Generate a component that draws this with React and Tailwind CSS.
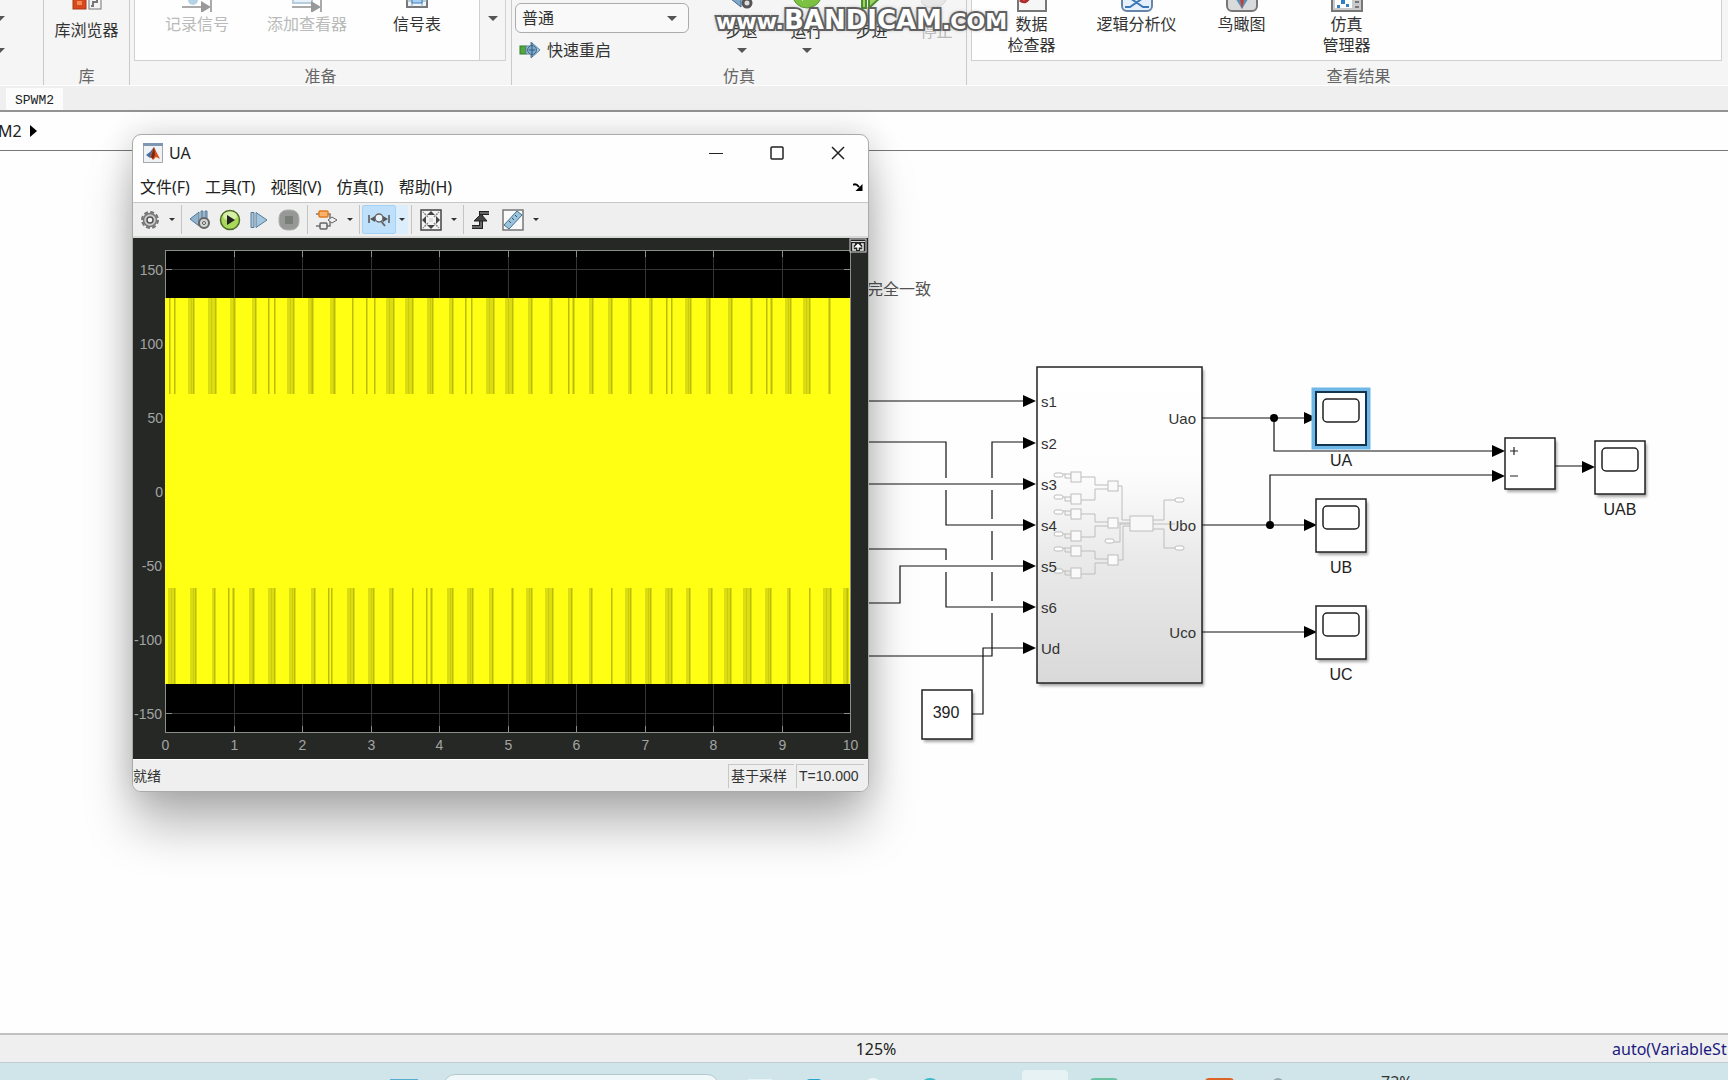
import React from 'react';

const UPPER_BANDS = [
    [4, 6], [9, 11], [23, 30], [43, 52], [65, 71], [87, 92], [104, 105], [109, 111], [122, 130], [143, 149],
    [165, 171], [187, 189], [201, 203], [209, 211], [221, 230], [240, 249], [262, 269], [284, 289], [301, 302],
    [306, 308], [321, 330], [340, 349], [363, 368], [384, 388], [403, 405], [407, 410], [424, 429], [443, 448],
    [463, 467], [484, 488], [502, 503], [506, 508], [520, 527], [541, 546], [563, 568], [585, 588], [602, 603],
    [605, 608], [620, 627], [638, 646], [663, 666],
];

const LOWER_BANDS = [
    [3, 11], [25, 32], [47, 51], [63, 65], [67, 70], [84, 90], [103, 111], [124, 131], [146, 151], [163, 165],
    [166, 168], [182, 190], [203, 210], [224, 229], [247, 249], [261, 263], [265, 268], [282, 289], [302, 309],
    [324, 329], [346, 349], [361, 368], [380, 389], [403, 408], [424, 428], [446, 448], [460, 467], [480, 487],
    [500, 508], [521, 526], [543, 548], [559, 567], [578, 587], [600, 607], [622, 626], [644, 646], [658, 667],
    [678, 684],
];

const Caret = ({ className = 'w-2.5 h-[5px] text-[#555]' }) => (
    <svg viewBox="0 0 10 5" className={className} fill="currentColor">
        <path d="M0 0h10L5 5z" />
    </svg>
);

/* ---------- ribbon ---------- */

const Section = ({ label, className = '', labelClass = '', children }) => (
    <section className={`flex flex-col h-[85px] border-r border-[#c9cac9] ${className}`}>
        <div className="flex-1 flex min-h-0">{children}</div>
        <div className={`h-[18px] leading-[18px] text-center text-base text-[#666] ${labelClass}`}>{label}</div>
    </section>
);

const RibbonItem = ({ icon, lines, disabled, className = '' }) => (
    <button disabled={disabled} className={`flex flex-col items-center shrink-0 ${disabled ? 'text-[#b9bab9]' : 'text-[#333]'} ${className}`}>
        <span className="-mt-3 h-6 mb-[2px]">{icon}</span>
        {lines.map((line) => (
            <span key={line} className="block text-base leading-[21px] whitespace-nowrap">{line}</span>
        ))}
    </button>
);

const LibraryIcon = () => (
    <svg width="32" height="24" viewBox="0 0 32 24">
        <rect x="2" y="0" width="12" height="10" fill="#4a86c5" />
        <rect x="2" y="11" width="13" height="12" fill="#d9481c" stroke="#a83814" />
        <rect x="6" y="15" width="5" height="4" fill="#f08b58" />
        <rect x="18" y="11" width="12" height="12" fill="#f2f4f5" stroke="#777" />
        <path d="M22 20v-4h4v-3M20 20h3" stroke="#777" strokeWidth="2" fill="none" />
    </svg>
);

const LogSignalIcon = () => (
    <svg width="34" height="24" viewBox="0 0 34 24">
        <circle cx="13" cy="12" r="5" fill="#b4d4e6" />
        <path d="M2 19h22M31 8v16" stroke="#aaa" strokeWidth="2" />
        <path d="M21 13l10 6-10 6z" fill="#999" />
    </svg>
);

const AddViewerIcon = () => (
    <svg width="34" height="24" viewBox="0 0 34 24">
        <rect x="3" y="2" width="19" height="13" fill="#e8f1f8" stroke="#b7cddd" strokeWidth="2" />
        <path d="M2 19h22M31 8v16" stroke="#aaa" strokeWidth="2" />
        <path d="M21 13l10 6-10 6z" fill="#999" />
    </svg>
);

const SignalTableIcon = () => (
    <svg width="24" height="24" viewBox="0 0 24 24">
        <rect x="2" y="0" width="20" height="19" fill="#eef4fb" stroke="#777" strokeWidth="2" />
        <path d="M2 7h20M2 13h20M7 1v18M17 1v18" stroke="#8aa" />
        <rect x="7" y="7" width="10" height="8" fill="#a8cff2" stroke="#3f7fc0" />
    </svg>
);

const DataInspectorIcon = () => (
    <svg width="32" height="24" viewBox="0 0 32 24">
        <rect x="2" y="0" width="28" height="23" fill="#f6f6f6" stroke="#777" strokeWidth="2" />
        <path d="M4 12q6 5 10-4" stroke="#b02a2a" strokeWidth="3" fill="none" />
    </svg>
);

const LogicIcon = () => (
    <svg width="32" height="24" viewBox="0 0 32 24">
        <rect x="1" y="-8" width="30" height="31" rx="5" fill="#e6f0fa" stroke="#6685a8" strokeWidth="2" />
        <path d="M4 10h5l13 9h6M4 19h5l13-9h6" stroke="#3a78b8" strokeWidth="2" fill="none" />
    </svg>
);

const BirdIcon = () => (
    <svg width="32" height="24" viewBox="0 0 32 24">
        <rect x="1" y="-8" width="30" height="31" rx="5" fill="#d8dadb" stroke="#777" strokeWidth="2" />
        <path d="M8 8l8 13 8-13z" fill="#5b8fb5" />
        <path d="M13 6h6l-3 15z" fill="#cc3a30" />
    </svg>
);

const SimManagerIcon = () => (
    <svg width="32" height="24" viewBox="0 0 32 24">
        <rect x="1" y="-2" width="30" height="25" fill="#c8cacb" stroke="#777" strokeWidth="2" />
        <rect x="4" y="1" width="17" height="19" fill="#fff" />
        <path d="M10 12h4v4h-4zM6 17h3v3H6zM15 16h3v3h-3z" fill="#2f7fc4" />
        <path d="M24 14h4M24 19h4" stroke="#777" strokeWidth="2" />
    </svg>
);

const FastRestartIcon = () => (
    <svg width="22" height="18" viewBox="0 0 22 18">
        <rect x="1" y="5" width="6" height="8" fill="#53a83d" stroke="#2f7d24" />
        <path d="M7 5h5V1l9 8-9 8v-4H7z" fill="#a9c6de" stroke="#5b82a6" />
        <circle cx="13" cy="9" r="4.500" fill="#7fa9cb" stroke="#44698c" />
        <path d="M13 2v14M10 9h6" stroke="#2f5a80" />
    </svg>
);

const SimButton = ({ icon, label, disabled, menu }) => (
    <button disabled={disabled} className={`w-[65px] flex flex-col items-center ${disabled ? 'text-[#b9bab9]' : 'text-[#333]'}`}>
        <span className="-mt-[15px] h-6 mb-3">{icon}</span>
        <span className="text-base leading-[20px]">{label}</span>
        {menu && <Caret className="w-2.5 h-[5px] mt-[7px] text-[#555]" />}
    </button>
);

const Ribbon = () => (
    <header className="relative flex bg-[#f4f5f4] overflow-hidden shrink-0 border-b border-white">
        <Section className="w-11 shrink-0">
            <div className="flex flex-col -ml-[5px] pt-4 gap-[27px]">
                <Caret />
                <Caret />
            </div>
        </Section>
        <Section label="库" className="w-[86px] shrink-0">
            <button className="w-full flex flex-col items-center text-[#333]">
                <span className="-mt-[14px] h-6 mb-[10px]"><LibraryIcon /></span>
                <span className="text-base leading-[20px]">库浏览器</span>
            </button>
        </Section>
        <Section label="准备" className="w-[382px] shrink-0">
            <div className="flex-1 flex bg-[#fdfefd] border border-t-0 border-[#cfd0cf] ml-1 mr-[5px] mb-[6px] pl-[7px]">
                <RibbonItem className="w-[110px]" icon={<LogSignalIcon />} lines={['记录信号']} disabled />
                <RibbonItem className="w-[110px]" icon={<AddViewerIcon />} lines={['添加查看器']} disabled />
                <RibbonItem className="w-[110px]" icon={<SignalTableIcon />} lines={['信号表']} />
                <button aria-label="更多" className="ml-auto w-[26px] flex justify-center pt-4 border-l border-[#cfd0cf] bg-[#f4f5f4]"><Caret /></button>
            </div>
        </Section>
        <Section label="仿真" className="w-[455px] shrink-0">
            <div className="flex flex-col pl-[3px] pt-[3px]">
                <div className="relative">
                    <select aria-label="仿真模式" className="appearance-none w-[174px] h-[30px] pl-[6px] text-base leading-[28px] text-[#333] bg-[#f8f9f8] border border-[#aaabaa] rounded-md">
                        <option>普通</option>
                    </select>
                    <Caret className="absolute right-3 top-[13px] w-2.5 h-[5px] text-[#555] pointer-events-none" />
                </div>
                <button className="flex items-center gap-[6px] h-6 mt-[5px] pl-[4px] text-base text-[#333]">
                    <FastRestartIcon />
                    快速重启
                </button>
            </div>
            <div className="flex items-start pl-5">
                <SimButton label="步退" menu icon={
                    <svg width="30" height="24" viewBox="0 0 30 24">
                        <path d="M4 14l10-8v16z" fill="#7fa9cb" stroke="#44698c" />
                        <circle cx="20" cy="18" r="4" fill="#ddd" stroke="#555" strokeWidth="3" />
                    </svg>
                } />
                <SimButton label="运行" menu icon={
                    <svg width="32" height="24" viewBox="0 0 32 24">
                        <circle cx="16" cy="8" r="15" fill="#7cc142" stroke="#55972c" />
                        <path d="M11 0l12 8-12 8z" fill="#fff" />
                    </svg>
                } />
                <SimButton label="步进" icon={
                    <svg width="28" height="24" viewBox="0 0 28 24">
                        <path d="M4 0h4v23H4zM11 0l14 10-14 13z" fill="#9fd067" stroke="#4a8f2c" strokeWidth="2" />
                    </svg>
                } />
                <SimButton label="停止" disabled icon={
                    <svg width="32" height="24" viewBox="0 0 32 24">
                        <circle cx="12" cy="8" r="15" fill="#e6e7e6" stroke="#d4d5d4" />
                    </svg>
                } />
            </div>
        </Section>
        <Section label="查看结果" className="flex-1 border-r-0" labelClass="pl-[22px]">
            <div className="flex-1 flex bg-[#fdfefd] border border-t-0 border-[#cfd0cf] ml-1 mr-[6px] mb-[6px] pl-[7px]">
                <RibbonItem className="w-[105px]" icon={<DataInspectorIcon />} lines={['数据', '检查器']} />
                <RibbonItem className="w-[105px]" icon={<LogicIcon />} lines={['逻辑分析仪']} />
                <RibbonItem className="w-[105px]" icon={<BirdIcon />} lines={['鸟瞰图']} />
                <RibbonItem className="w-[105px]" icon={<SimManagerIcon />} lines={['仿真', '管理器']} />
            </div>
        </Section>
    </header>
);

const Watermark = () => (
    <div className="absolute left-[716px] top-[5px] z-20 flex items-baseline whitespace-nowrap text-white font-bold font-['DejaVu_Sans',sans-serif] leading-[30px] [paint-order:stroke] [-webkit-text-stroke:4px_#666] [text-shadow:0_0_4px_#555]">
        <span className="text-[22px]">www.</span>
        <span className="text-[26px]">BANDICAM</span>
        <span className="text-[22px]">.COM</span>
    </div>
);

/* ---------- block diagram ---------- */

const Arrow = ({ x, y }) => <path d={`M${x - 13} ${y - 6}L${x} ${y}L${x - 13} ${y + 6}z`} fill="#000" />;

const Box = ({ x, y, w, h, fill = '#fefffe' }) => (
    <g>
        <rect x={x + 2} y={y + 3} width={w} height={h} fill="#000" opacity="0.35" filter="url(#soft)" />
        <rect x={x} y={y} width={w} height={h} fill={fill} stroke="#222" strokeWidth="1.5" />
    </g>
);

const ScopeBlock = ({ x, y, name, selected }) => (
    <g>
        {selected && <rect x={x - 2} y={y - 2} width="54" height="57" fill="none" stroke="#6fb7e6" strokeWidth="5" />}
        {selected
            ? <rect x={x} y={y} width="50" height="53" fill="#fefffe" stroke="#12354f" strokeWidth="2" />
            : <Box x={x} y={y} w={50} h={53} />}
        <rect x={x + 7} y={y + 7} width="36" height="23" rx="4" fill="none" stroke="#222" strokeWidth="1.5" />
        <text x={x + 25} y={y + 74} textAnchor="middle" fontSize="16" fill="#222">{name}</text>
    </g>
);

const INPUTS = [['s1', 401], ['s2', 443], ['s3', 484], ['s4', 525], ['s5', 566], ['s6', 607], ['Ud', 648]];
const OUTPUTS = [['Uao', 418], ['Ubo', 525], ['Uco', 632]];

// preview of the subsystem contents, shown faded inside the block
const Preview = () => (
    <g stroke="#bcbdbc" fill="none">
        {[474, 511, 548].map((y) => (
            <g key={y}>
                <path d={`M1063 ${y}h8v3M1063 ${y + 23}h8v3M1065 ${y}v4h6M1065 ${y + 23}v4h6M1081 ${y + 3}h14v8h13M1081 ${y + 26}h14v-11h13`} />
                <rect x="1054" y={y - 1} width="9" height="4" rx="2" fill="#fff" />
                <rect x="1054" y={y + 21} width="9" height="4" rx="2" fill="#fff" />
                <rect x="1071" y={y - 2} width="10" height="10" fill="#fafafa" />
                <rect x="1071" y={y + 20} width="10" height="10" fill="#fafafa" />
                <rect x="1108" y={y + 7} width="10" height="10" fill="#fafafa" />
            </g>
        ))}
        <path d="M1118 486h4v34h8M1118 523h12M1118 560h5v-34h7M1114 542h6v-18h10M1153 520h11v-20h11M1153 524h22M1153 529h11v19h11" />
        <rect x="1105" y="539" width="9" height="4" rx="2" fill="#fff" />
        <rect x="1130" y="516" width="23" height="15" fill="#f8f8f8" />
        <rect x="1175" y="498" width="9" height="4" rx="2" fill="#fff" />
        <rect x="1175" y="546" width="9" height="4" rx="2" fill="#fff" />
    </g>
);

const Diagram = () => (
    <svg className="absolute inset-0 w-full h-full font-['Liberation_Sans',sans-serif]">
        <defs>
            <linearGradient id="subsystem" x1="0" y1="0" x2="0" y2="1">
                <stop offset="0" stopColor="#fefffe" />
                <stop offset="0.33" stopColor="#fcfdfc" />
                <stop offset="0.6" stopColor="#e9eae9" />
                <stop offset="1" stopColor="#d8d9d8" />
            </linearGradient>
            <filter id="soft" x="-20%" y="-20%" width="140%" height="140%"><feGaussianBlur stdDeviation="1.5" /></filter>
        </defs>
        <g transform="translate(0 -151)">
            <text x="867" y="295" fontSize="16" fill="#555" fontFamily="'Liberation Serif','Noto Sans CJK SC',serif">完全一致</text>
            <g stroke="#111" strokeWidth="1.2" fill="none">
                <path d="M860 401H1030M860 484H1030" />
                <path d="M860 442H946V478M946 490V525H1030" />
                <path d="M860 549H946V560M946 572V607H1030" />
                <path d="M860 603H900V566H1030" />
                <path d="M860 656H992V613M992 601V572M992 560V531M992 519V490M992 478V442H1030" />
                <path d="M972 714H983V648H1030" />
                <path d="M1202 418H1310M1274 418V451H1500M1202 525H1310M1270 525V475H1500M1202 632H1310M1555 466H1590" />
            </g>
            <circle cx="1274" cy="418" r="4" />
            <circle cx="1270" cy="525" r="4" />

            <Box x={1037} y={367} w={165} h={316} fill="url(#subsystem)" />
            <Preview />
            {INPUTS.map(([name, y]) => (
                <g key={name}>
                    <Arrow x={1036} y={y} />
                    <text x="1041" y={y + 6} fontSize="15" fill="#333">{name}</text>
                </g>
            ))}
            {OUTPUTS.map(([name, y]) => (
                <g key={name}>
                    <Arrow x={1317} y={y} />
                    <text x="1196" y={y + 6} fontSize="15" fill="#333" textAnchor="end">{name}</text>
                </g>
            ))}

            <Box x={922} y={690} w={50} h={49} />
            <text x="946" y="718" fontSize="16" fill="#222" textAnchor="middle">390</text>

            <ScopeBlock x={1316} y={392} name="UA" selected />
            <ScopeBlock x={1316} y={499} name="UB" />
            <ScopeBlock x={1316} y={606} name="UC" />

            <Arrow x={1505} y={451} />
            <Arrow x={1505} y={476} />
            <Box x={1505} y={438} w={50} h={51} />
            <path d="M1510 451h8M1514 447v8M1510 476h8" stroke="#222" strokeWidth="1.2" />
            <Arrow x={1595} y={467} />
            <ScopeBlock x={1595} y={441} name="UAB" />
        </g>
    </svg>
);

/* ---------- scope window ---------- */

const Bands = ({ bands, y, h }) => bands.map(([a, b]) => (
    <g key={a}>
        <rect x={32 + a} y={y} width={b - a} height={h} fill="#dcdc12" />
        {b - a > 5 && <rect x={32 + a + 3} y={y} width="1" height={h} fill="#cccc0a" />}
        <rect x={32 + b - 2} y={y} width="1" height={h} fill="#bdbd08" />
    </g>
));

const X_TICKS = [0, 1, 2, 3, 4, 5, 6, 7, 8, 9, 10];
const Y_TICKS = [150, 100, 50, 0, -50, -100, -150];
const tickX = (v) => Math.round(32 + v * 68.5) + 0.5;
const tickY = (v) => Math.round(253 - v * 1.483) + 0.5;

const Plot = () => (
    <svg viewBox="0 0 735 521" className="block w-full h-[521px] bg-[#262826] font-['Liberation_Sans',sans-serif]">
        <rect x="32.5" y="12.5" width="685" height="482" fill="#000" />
        <g stroke="#333533">
            {X_TICKS.slice(1, 10).map((v) => <path key={v} d={`M${tickX(v)} 12V495`} />)}
            {Y_TICKS.map((v) => <path key={v} d={`M32 ${tickY(v)}H718`} />)}
        </g>
        <g stroke="#8b8d8b">
            {X_TICKS.slice(1, 10).map((v) => <path key={v} d={`M${tickX(v)} 12v7M${tickX(v)} 495v-7`} />)}
            {[150, -150].map((v) => <path key={v} d={`M32 ${tickY(v)}h7M718 ${tickY(v)}h-7`} />)}
        </g>
        <rect x="32.5" y="12.5" width="685" height="482" fill="none" stroke="#8b8d8b" />
        <rect x="32" y="60" width="685" height="386" fill="#ffff14" />
        <Bands bands={UPPER_BANDS} y={60} h={96} />
        <Bands bands={LOWER_BANDS} y={350} h={96} />
        <g fill="#a2a4a2" fontSize="14">
            {Y_TICKS.map((v) => <text key={v} x={v < 0 ? 29 : 30} y={tickY(v) + 5} textAnchor="end">{v}</text>)}
            {X_TICKS.map((v) => <text key={v} x={tickX(v)} y="512" textAnchor="middle">{v}</text>)}
        </g>
        <g>
            <rect x="717" y="1" width="16" height="13" fill="#222" stroke="#d5d6d5" />
            <path d="M718 3.500h14" stroke="#d5d6d5" />
            <path d="M722 6h-2v6h3M728 6h2v6h-3M725 12V8" stroke="#eee" fill="none" strokeWidth="1.500" />
            <path d="M721 9.500l4-4 4 4z" fill="#fff" />
        </g>
    </svg>
);

const Sep = () => <span className="w-[6px] flex justify-center shrink-0"><span className="w-px h-[29px] bg-[#c3c4c3]" /></span>;

const ToolButton = ({ label, className = 'w-[34px]', children }) => (
    <button aria-label={label} className={`h-[29px] flex items-center justify-center shrink-0 ${className}`}>{children}</button>
);

const ToolCaret = ({ className = '' }) => (
    <button aria-label="展开" className={`w-3 h-[29px] flex items-center justify-center shrink-0 ${className}`}>
        <Caret className="w-[6px] h-[3px] text-[#333]" />
    </button>
);

const Toolbar = () => (
    <div className="flex items-center h-[35px] bg-[#eeefee] border-b-2 border-[#d8dad8]">
        <ToolButton label="配置属性" className="w-[33px]">
            <svg width="20" height="20" viewBox="0 0 20 20" fill="none">
                <circle cx="10" cy="10" r="8" stroke="#777" strokeWidth="2" strokeDasharray="4 2.280" />
                <circle cx="10" cy="10" r="6.500" fill="#c9cbc9" stroke="#777" strokeWidth="1.500" />
                <circle cx="10" cy="10" r="3" fill="#f4f4f4" stroke="#555" strokeWidth="1.500" />
            </svg>
        </ToolButton>
        <ToolCaret />
        <Sep />
        <ToolButton label="步退" className="w-[32px]">
            <svg width="22" height="20" viewBox="0 0 22 20">
                <path d="M1 9l9-7v14zM12 1h2v12h-2zM16 1h2v9h-2z" fill="#8fb2cd" stroke="#567a98" />
                <circle cx="15" cy="13" r="5" fill="#d5d7d5" stroke="#666" strokeWidth="2" />
                <circle cx="15" cy="13" r="1.500" fill="#fff" stroke="#555" />
            </svg>
        </ToolButton>
        <ToolButton label="运行" className="w-[28px]">
            <svg width="22" height="22" viewBox="0 0 22 22">
                <circle cx="11" cy="11" r="9.500" fill="#a8d95a" stroke="#4d6b26" strokeWidth="1.500" />
                <ellipse cx="11" cy="7" rx="7" ry="4.500" fill="#e2f4bd" opacity="0.800" />
                <path d="M8 6l8 5-8 5z" fill="#222" />
            </svg>
        </ToolButton>
        <ToolButton label="步进" className="w-[30px]">
            <svg width="18" height="18" viewBox="0 0 18 18" fill="#a5c5dc" stroke="#567a98">
                <path d="M1 1.500h3v15H1zM6 1.500l11 7.500-11 7.500z" />
            </svg>
        </ToolButton>
        <ToolButton label="停止" className="w-[30px]">
            <svg width="22" height="22" viewBox="0 0 22 22">
                <rect x="1" y="1" width="20" height="20" rx="8" fill="#969896" stroke="#b0b2b0" />
                <rect x="7" y="7" width="8" height="8" fill="#7b7d7b" />
            </svg>
        </ToolButton>
        <Sep />
        <ToolButton label="信号选择器">
            <svg width="22" height="20" viewBox="0 0 22 20" fill="none">
                <path d="M0 4h14v5M0 16h14v-5" stroke="#777" strokeWidth="1.500" />
                <rect x="3" y="1" width="9" height="6" rx="1" fill="#fbb26a" stroke="#e07b1c" strokeWidth="1.500" />
                <rect x="4" y="13" width="7" height="6" rx="1" fill="#eee" stroke="#666" strokeWidth="1.500" />
                <path d="M12 10l4-3 5 3-5 3z" fill="#eee" stroke="#666" />
            </svg>
        </ToolButton>
        <ToolCaret />
        <Sep />
        <ToolButton label="缩放 X" className="w-[34px] bg-[#bfe0fa] border border-[#a3d2f7] rounded-[2px]">
            <svg width="22" height="16" viewBox="0 0 22 16" fill="none">
                <path d="M1 3v8M21 3v8" stroke="#555" strokeWidth="1.500" />
                <path d="M2 7l5-3v6zM20 7l-5-3v6z" fill="#555" />
                <circle cx="11" cy="6" r="4" fill="#e8f4fc" stroke="#666" strokeWidth="1.500" />
                <path d="M13 9l4 5" stroke="#666" strokeWidth="2" />
            </svg>
        </ToolButton>
        <ToolCaret className="bg-[#dceefb]" />
        <Sep />
        <ToolButton label="缩放至适合">
            <svg width="22" height="22" viewBox="0 0 22 22">
                <rect x="1" y="1" width="20" height="20" fill="#f4f4f4" stroke="#444" strokeWidth="1.500" />
                <path d="M8 8L3 3M14 8l5-5M8 14l-5 5M14 14l5 5" stroke="#888" strokeWidth="1.500" strokeDasharray="2 1" />
                <path d="M11 2l4 4H7zM11 20l4-4H7zM2 11l4-4v8zM20 11l-4-4v8z" fill="#444" />
                <rect x="9" y="9" width="4" height="4" fill="#ddd" />
            </svg>
        </ToolButton>
        <ToolCaret />
        <Sep />
        <ToolButton label="触发器" className="w-[30px]">
            <svg width="20" height="20" viewBox="0 0 20 20" fill="none">
                <path d="M1 17h9V3h8" stroke="#222" strokeWidth="4" />
                <path d="M1 17h9V3h8" stroke="#666" strokeWidth="2" />
                <path d="M3 11l7-7 6 7z" fill="#444" stroke="#222" />
            </svg>
        </ToolButton>
        <ToolButton label="光标测量">
            <svg width="22" height="22" viewBox="0 0 22 22">
                <rect x="1" y="1" width="20" height="20" fill="#fafafa" stroke="#777" strokeWidth="1.500" />
                <path d="M2 16L15 2l5 4L7 20z" fill="#9cc3dc" stroke="#44708e" />
                <path d="M7 12l2 2M10 9l2 2M13 6l2 2" stroke="#2f5470" />
            </svg>
        </ToolButton>
        <ToolCaret />
    </div>
);

const MENUS = ['文件(F)', '工具(T)', '视图(V)', '仿真(I)', '帮助(H)'];

const ScopeWindow = () => (
    <div className="absolute left-[132px] top-[134px] z-10 w-[737px] rounded-[9px] border border-[#a9aba9] bg-[#fdfefd] overflow-hidden shadow-[0_36px_50px_-2px_rgba(0,0,0,0.28),0_0_32px_rgba(0,0,0,0.16)]">
        <div className="flex items-center h-9 pl-[10px]">
            <svg width="20" height="20" viewBox="0 0 20 20">
                <rect x="0.500" y="0.500" width="19" height="19" fill="#f0f2f4" stroke="#a3a9ae" />
                <rect x="0" y="0" width="20" height="3" fill="#7d97b3" />
                <path d="M3 12l4-3 4-5-2 10-2 1z" fill="#3973ad" />
                <path d="M7 13l4-9 3 6 3 6-4-2-3 3z" fill="#d9531e" />
                <path d="M11 4l1 8-2 4-2-2z" fill="#7c2614" />
            </svg>
            <h1 className="pl-[6px] text-base text-[#222]">UA</h1>
            <div className="ml-auto flex text-[#222]">
                <button aria-label="最小化" className="w-[61px] h-9 flex items-center justify-center">
                    <svg width="14" height="14" stroke="currentColor"><path d="M0 7.500h14" /></svg>
                </button>
                <button aria-label="最大化" className="w-[61px] h-9 flex items-center justify-center">
                    <svg width="14" height="14" fill="none" stroke="currentColor" strokeWidth="1.500"><rect x="1" y="1" width="12" height="12" rx="1" /></svg>
                </button>
                <button aria-label="关闭" className="w-[61px] h-9 flex items-center justify-center">
                    <svg width="14" height="14" stroke="currentColor" strokeWidth="1.500"><path d="M1 1l12 12M13 1L1 13" /></svg>
                </button>
            </div>
        </div>
        <nav className="flex items-center h-8 pl-[7px] gap-[15px] border-b border-[#c6c8c6] text-base text-[#222]">
            {MENUS.map((name) => <button key={name} className="whitespace-nowrap">{name}</button>)}
            <svg width="10" height="8" viewBox="0 0 10 8" className="ml-auto mr-[5px]">
                <path d="M0 2q3-2 6 2" stroke="#000" strokeWidth="2" fill="none" />
                <path d="M9.500 1v7h-7z" fill="#000" />
            </svg>
        </nav>
        <Toolbar />
        <Plot />
        <footer className="flex items-center h-8 bg-[#eeefee] border-t border-white text-sm text-[#333] font-['Liberation_Sans','Noto_Sans_CJK_SC',sans-serif]">
            <span>就绪</span>
            <span className="ml-auto w-[66px] h-6 leading-[22px] pl-[2px] border-l border-t border-[#c6c8c6] whitespace-nowrap">基于采样</span>
            <span className="ml-[2px] mr-1 w-[68px] h-6 leading-[22px] pl-[2px] border-l border-t border-[#c6c8c6]">T=10.000</span>
        </footer>
    </div>
);

/* ---------- taskbar, only its upper edge is on screen ---------- */

const Taskbar = () => (
    <div className="relative h-[18px] shrink-0 overflow-hidden bg-[#cfe5e9] border-t border-[#bccdd0]">
        <span className="absolute left-[390px] top-4 w-7 h-4 bg-[#58aed0]" />
        <input aria-label="搜索" className="absolute left-[443px] top-[11px] w-[276px] h-10 rounded-xl bg-[#f0f8fa] border border-[#b5c8cc]" />
        <span className="absolute left-[748px] top-4 w-6 h-4 bg-[#e6f2f4]" />
        <span className="absolute left-[806px] top-4 w-4 h-4 rounded-t bg-[#25a5d2]" />
        <span className="absolute left-[863px] top-[15px] w-5 h-5 rounded-full bg-[#eef7f8]" />
        <span className="absolute left-[920px] top-[15px] w-5 h-5 rounded-full bg-[#39b9c8]" />
        <span className="absolute left-[1022px] top-[7px] w-[46px] h-10 rounded bg-[#e6f2f3]" />
        <span className="absolute left-[1090px] top-[15px] w-7 h-6 rounded bg-[#6ac2a0]" />
        <span className="absolute left-[1205px] top-[15px] w-[29px] h-6 rounded-sm bg-[#dc6427]" />
        <span className="absolute left-[1272px] top-[15px] w-3 h-3 rounded-full border-2 border-[#9aa9ac]" />
        <span className="absolute left-[1381px] top-[10px] text-base leading-[18px] text-[#333]">72%</span>
    </div>
);

export default function App() {
    return (
        <div className="relative flex flex-col h-screen w-full overflow-hidden bg-[#fdfefd] font-['Noto_Sans','Noto_Sans_CJK_SC',sans-serif]">
            <Ribbon />
            <Watermark />
            <div className="flex items-end h-[26px] shrink-0 pl-[6px] bg-[#eeefee] border-b-2 border-[#929392]">
                <button className="w-[57px] h-[22px] pt-1 bg-[#fbfcfb] text-[13px] leading-[18px] text-[#222] font-['Liberation_Mono',monospace]">SPWM2</button>
            </div>
            <div className="flex items-center h-[39px] shrink-0 gap-2 border-b border-[#777] text-base text-[#222]">
                <span className="-ml-[2px]">M2</span>
                <svg width="7" height="12" viewBox="0 0 7 12"><path d="M0 0l7 6-7 6z" /></svg>
            </div>
            <main className="relative flex-1 min-h-0 overflow-hidden">
                <Diagram />
            </main>
            <ScopeWindow />
            <footer className="flex items-center h-[29px] shrink-0 bg-[#eeefee] border-t-2 border-[#bfc0bf] text-base">
                <span className="flex-1" />
                <span className="pl-6 text-[#222]">125%</span>
                <span className="flex-1 flex justify-end overflow-hidden">
                    <span className="w-[116px] whitespace-nowrap text-[#1c1a80]">auto(VariableSt</span>
                </span>
            </footer>
            <Taskbar />
        </div>
    );
}
